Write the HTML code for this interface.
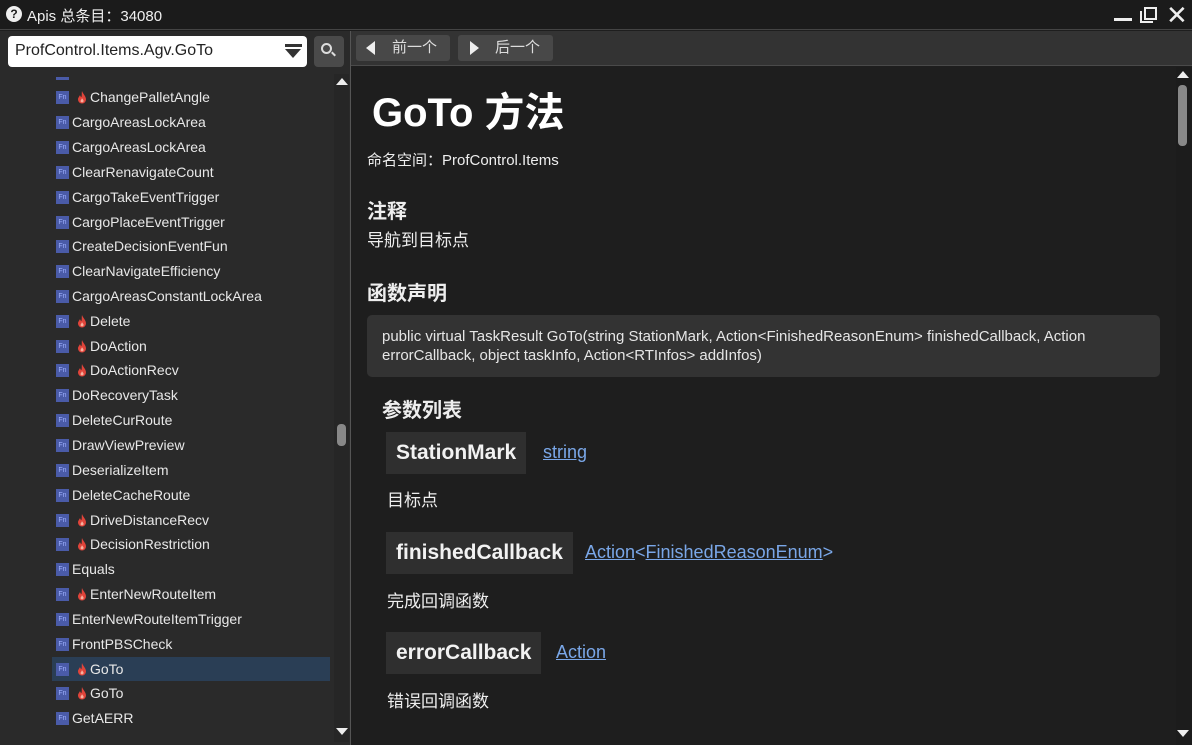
<!DOCTYPE html>
<html><head><meta charset="utf-8"><style>
*{margin:0;padding:0;box-sizing:border-box}
body{width:1192px;height:745px;background:#1e1e1e;font-family:"Liberation Sans","Noto Sans CJK SC",sans-serif;color:#eee;position:relative;overflow:hidden}
.abs{position:absolute}
#title{left:0;top:0;width:1192px;height:30px;background:#1b1b1b;border-bottom:1px solid #444}
#left{left:0;top:31px;width:350px;height:714px;background:#2a2a2a}
#tool{left:351px;top:31px;width:841px;height:35px;background:#333;border-bottom:1px solid #4a4a4a}
.it{position:absolute;left:56px;height:22px;font-size:14px;line-height:22px;color:#e8e8e8;white-space:nowrap;display:flex;align-items:center}
.fn{display:inline-block;width:13px;height:13px;background:#4a5ba8;color:#9fb0ff;font-size:7px;line-height:13px;text-align:center;margin-right:3px;flex:none}
.fl{width:14px;height:14px;margin:0 1px 0 3px;flex:none}
.btn{position:absolute;top:35px;height:26px;background:#484848;border-radius:3px;color:#ddd;font-size:15px;line-height:26px}
h1{position:absolute;left:372px;top:80px;font-size:40px;font-weight:bold;color:#fff}
.t{position:absolute;white-space:nowrap}
.pn{position:absolute;left:386px;height:42px;background:#2f2f2f;padding:0 10px;font-size:21px;font-weight:bold;line-height:42px;color:#f2f2f2}
a{color:#7aa7e8;text-decoration:underline}
</style></head><body>
<svg width="0" height="0" style="position:absolute"><defs><symbol id="f" viewBox="0 0 14 14"><path d="M7 1C8 4 11 6 11 9.5A4 4 0 0 1 3 9.5C3 7.5 4.5 6.5 5 5C5.5 6.5 6 7 6.5 7C7 5 6.5 3 7 1Z" fill="#e0443a"/><path d="M7 8C7.5 9.5 9 10 8.5 11.5A1.6 1.6 0 0 1 5.5 11.2C5.6 10 6.7 9.5 7 8Z" fill="#f7b0a0"/></symbol></defs></svg>
<div id="title" class="abs">
 <div class="t" style="left:6px;top:6px;width:16px;height:16px;border-radius:50%;background:#eee;color:#1b1b1b;font-size:12px;font-weight:bold;text-align:center;line-height:16px">?</div>
 <div class="t" style="left:27px;top:5px;font-size:15px;color:#eee">Apis 总条目：34080</div>
 <div class="abs" style="left:1114px;top:18px;width:18px;height:3px;background:#eee"></div>
 <div class="abs" style="left:1144px;top:7px;width:13px;height:13px;border:2px solid #eee;background:#1b1b1b"></div>
 <div class="abs" style="left:1140px;top:11px;width:13px;height:12px;border-left:2px solid #eee;border-bottom:2px solid #eee"></div>
 <div class="t" style="left:1166px;top:1px;font-size:26px;color:#eee;line-height:28px">✕</div>
</div>
<div id="left" class="abs"></div>
<div class="abs" style="left:350px;top:31px;width:1px;height:714px;background:#555"></div>
<div class="abs" style="left:8px;top:36px;width:299px;height:31px;background:#fff;border-radius:4px"></div>
<div class="t" style="left:15px;top:42px;font-size:16px;color:#222">ProfControl.Items.Agv.GoTo</div>
<div class="abs" style="left:285px;top:44px;width:17px;height:3px;background:#333"></div>
<div class="abs" style="left:285px;top:49px;width:0;height:0;border-left:8px solid transparent;border-right:8px solid transparent;border-top:9px solid #333"></div>
<div class="abs" style="left:314px;top:36px;width:30px;height:31px;background:#4a4a4a;border-radius:4px"></div>
<div class="abs" style="left:321px;top:43px;width:11px;height:11px;border:2px solid #ddd;border-radius:50%"></div>
<div class="abs" style="left:331px;top:53px;width:5px;height:2px;background:#ddd;transform:rotate(45deg)"></div>
<div id="tool" class="abs"></div>
<div class="btn" style="left:356px;width:94px"><span style="position:absolute;left:10px;top:6px;border-top:7px solid transparent;border-bottom:7px solid transparent;border-right:9px solid #eee"></span><span style="position:absolute;left:36px">前一个</span></div>
<div class="btn" style="left:458px;width:95px"><span style="position:absolute;left:12px;top:6px;border-top:7px solid transparent;border-bottom:7px solid transparent;border-left:9px solid #eee"></span><span style="position:absolute;left:37px">后一个</span></div>
<!-- list -->
<div class="abs" style="left:56px;top:77px;width:13px;height:3px;background:#4a5ba8"></div>
<div class="abs" style="left:52px;top:657px;width:278px;height:24px;background:#2a3e55"></div>
<div class="it" style="top:86px"><span class="fn">Fn</span><svg class="fl"><use href="#f"/></svg>ChangePalletAngle</div>
<div class="it" style="top:111px"><span class="fn">Fn</span>CargoAreasLockArea</div>
<div class="it" style="top:136px"><span class="fn">Fn</span>CargoAreasLockArea</div>
<div class="it" style="top:161px"><span class="fn">Fn</span>ClearRenavigateCount</div>
<div class="it" style="top:186px"><span class="fn">Fn</span>CargoTakeEventTrigger</div>
<div class="it" style="top:211px"><span class="fn">Fn</span>CargoPlaceEventTrigger</div>
<div class="it" style="top:235px"><span class="fn">Fn</span>CreateDecisionEventFun</div>
<div class="it" style="top:260px"><span class="fn">Fn</span>ClearNavigateEfficiency</div>
<div class="it" style="top:285px"><span class="fn">Fn</span>CargoAreasConstantLockArea</div>
<div class="it" style="top:310px"><span class="fn">Fn</span><svg class="fl"><use href="#f"/></svg>Delete</div>
<div class="it" style="top:335px"><span class="fn">Fn</span><svg class="fl"><use href="#f"/></svg>DoAction</div>
<div class="it" style="top:359px"><span class="fn">Fn</span><svg class="fl"><use href="#f"/></svg>DoActionRecv</div>
<div class="it" style="top:384px"><span class="fn">Fn</span>DoRecoveryTask</div>
<div class="it" style="top:409px"><span class="fn">Fn</span>DeleteCurRoute</div>
<div class="it" style="top:434px"><span class="fn">Fn</span>DrawViewPreview</div>
<div class="it" style="top:459px"><span class="fn">Fn</span>DeserializeItem</div>
<div class="it" style="top:484px"><span class="fn">Fn</span>DeleteCacheRoute</div>
<div class="it" style="top:509px"><span class="fn">Fn</span><svg class="fl"><use href="#f"/></svg>DriveDistanceRecv</div>
<div class="it" style="top:533px"><span class="fn">Fn</span><svg class="fl"><use href="#f"/></svg>DecisionRestriction</div>
<div class="it" style="top:558px"><span class="fn">Fn</span>Equals</div>
<div class="it" style="top:583px"><span class="fn">Fn</span><svg class="fl"><use href="#f"/></svg>EnterNewRouteItem</div>
<div class="it" style="top:608px"><span class="fn">Fn</span>EnterNewRouteItemTrigger</div>
<div class="it" style="top:633px"><span class="fn">Fn</span>FrontPBSCheck</div>
<div class="it" style="top:658px"><span class="fn">Fn</span><svg class="fl"><use href="#f"/></svg>GoTo</div>
<div class="it" style="top:682px"><span class="fn">Fn</span><svg class="fl"><use href="#f"/></svg>GoTo</div>
<div class="it" style="top:707px"><span class="fn">Fn</span>GetAERR</div>
<!-- left scrollbar -->
<div class="abs" style="left:334px;top:74px;width:15px;height:668px;background:#262626"></div>
<div class="abs" style="left:336px;top:78px;border-left:6px solid transparent;border-right:6px solid transparent;border-bottom:7px solid #eee"></div>
<div class="abs" style="left:337px;top:424px;width:9px;height:22px;background:#888;border-radius:4px"></div>
<div class="abs" style="left:336px;top:728px;border-left:6px solid transparent;border-right:6px solid transparent;border-top:7px solid #eee"></div>
<!-- right scrollbar -->
<div class="abs" style="left:1176px;top:67px;width:16px;height:678px;background:#1c1c1c"></div>
<div class="abs" style="left:1177px;top:71px;border-left:6px solid transparent;border-right:6px solid transparent;border-bottom:7px solid #eee"></div>
<div class="abs" style="left:1178px;top:85px;width:9px;height:61px;background:#888;border-radius:4px"></div>
<div class="abs" style="left:1177px;top:730px;border-left:6px solid transparent;border-right:6px solid transparent;border-top:7px solid #eee"></div>
<!-- content -->
<h1>GoTo 方法</h1>
<div class="t" style="left:367px;top:149px;font-size:15px">命名空间：ProfControl.Items</div>
<div class="t" style="left:367px;top:195px;font-size:20px;font-weight:bold">注释</div>
<div class="t" style="left:367px;top:226px;font-size:17px">导航到目标点</div>
<div class="t" style="left:367px;top:277px;font-size:20px;font-weight:bold">函数声明</div>
<div class="abs" style="left:367px;top:315px;width:793px;height:62px;background:#333;border-radius:5px;padding:12px 15px;font-size:15px;line-height:19px;color:#e6e6e6">public virtual TaskResult GoTo(string StationMark, Action&lt;FinishedReasonEnum&gt; finishedCallback, Action errorCallback, object taskInfo, Action&lt;RTInfos&gt; addInfos)</div>
<div class="t" style="left:382px;top:394px;font-size:20px;font-weight:bold">参数列表</div>
<div class="pn" style="top:432px">StationMark</div>
<div class="t" style="left:543px;top:442px;font-size:18px"><a>string</a></div>
<div class="t" style="left:387px;top:486px;font-size:17px">目标点</div>
<div class="pn" style="top:532px">finishedCallback</div>
<div class="t" style="left:585px;top:542px;font-size:18px;color:#7aa7e8"><a>Action</a>&lt;<a>FinishedReasonEnum</a>&gt;</div>
<div class="t" style="left:387px;top:587px;font-size:17px">完成回调函数</div>
<div class="pn" style="top:632px">errorCallback</div>
<div class="t" style="left:556px;top:642px;font-size:18px"><a>Action</a></div>
<div class="t" style="left:387px;top:687px;font-size:17px">错误回调函数</div>
</body></html>
